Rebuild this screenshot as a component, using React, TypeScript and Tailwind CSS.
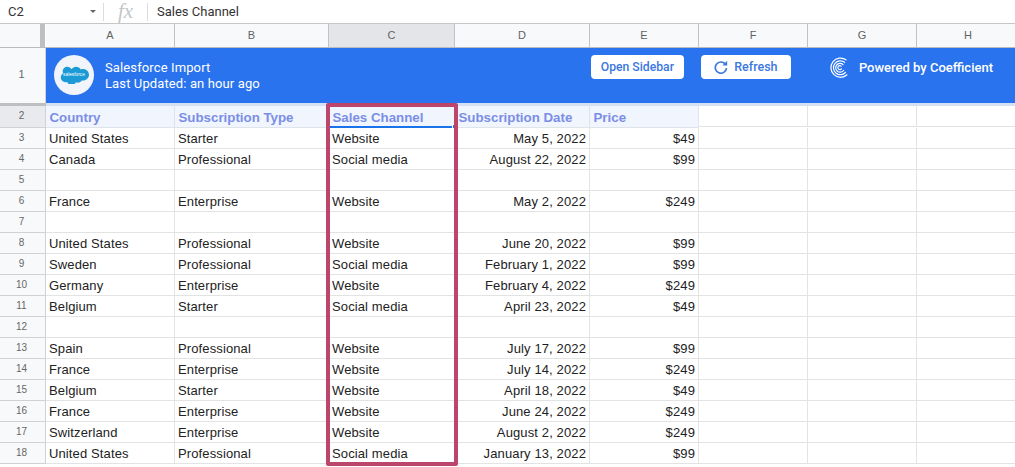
import React from "react";

const columns = ["A", "B", "C", "D", "E", "F", "G", "H"];
const grid = "grid grid-cols-[46px_129px_154px_126px_135px_109px_109px_109px_103px]";

type Row = { n: number; country?: string; plan?: string; channel?: string; date?: string; price?: string };

const rows: Row[] = [
  { n: 3, country: "United States", plan: "Starter", channel: "Website", date: "May 5, 2022", price: "$49" },
  { n: 4, country: "Canada", plan: "Professional", channel: "Social media", date: "August 22, 2022", price: "$99" },
  { n: 5 },
  { n: 6, country: "France", plan: "Enterprise", channel: "Website", date: "May 2, 2022", price: "$249" },
  { n: 7 },
  { n: 8, country: "United States", plan: "Professional", channel: "Website", date: "June 20, 2022", price: "$99" },
  { n: 9, country: "Sweden", plan: "Professional", channel: "Social media", date: "February 1, 2022", price: "$99" },
  { n: 10, country: "Germany", plan: "Enterprise", channel: "Website", date: "February 4, 2022", price: "$249" },
  { n: 11, country: "Belgium", plan: "Starter", channel: "Social media", date: "April 23, 2022", price: "$49" },
  { n: 12 },
  { n: 13, country: "Spain", plan: "Professional", channel: "Website", date: "July 17, 2022", price: "$99" },
  { n: 14, country: "France", plan: "Enterprise", channel: "Website", date: "July 14, 2022", price: "$249" },
  { n: 15, country: "Belgium", plan: "Starter", channel: "Website", date: "April 18, 2022", price: "$49" },
  { n: 16, country: "France", plan: "Enterprise", channel: "Website", date: "June 24, 2022", price: "$249" },
  { n: 17, country: "Switzerland", plan: "Enterprise", channel: "Website", date: "August 2, 2022", price: "$249" },
  { n: 18, country: "United States", plan: "Professional", channel: "Social media", date: "January 13, 2022", price: "$99" },
];

const headers = ["Country", "Subscription Type", "Sales Channel", "Subscription Date", "Price"];

const Cell = ({ children, right }: { children?: React.ReactNode; right?: boolean }) => (
  <div className={`h-[21px] border-r border-b border-[#e2e3e3] px-[3px] text-[13px] tracking-[0.12px] leading-[21px] text-[#222] whitespace-nowrap overflow-hidden ${right ? "text-right" : ""}`}>
    {children}
  </div>
);

const RowLabel = ({ n }: { n: number }) => (
  <div className="h-[21px] bg-[#f8f9fa] border-r border-b border-[#d0d2d4] text-center pr-[2px] text-[10px] leading-[20px] text-[#666]">
    {n}
  </div>
);

const SalesforceLogo = () => (
  <div className="w-[40px] h-[40px] rounded-full bg-[#f1f5fb] flex items-center justify-center">
    <div className="relative w-[29px] h-[18px]">
      <svg viewBox="0 0 30 18" className="w-full h-full">
        <path d="M12 3c1-1.600 2.700-2.500 4.500-2.500 2.200 0 4 1.100 5 2.800 .8-.4 1.500-.5 2.300-.5 3.400 0 6.200 2.700 6.200 6s-2.800 6-6.200 6c-.4 0-.8 0-1.300-.1-.8 1.400-2.300 2.300-4 2.300-.7 0-1.400-.2-2-.5-.8 1.800-2.500 3-4.500 3-2.100 0-3.900-1.300-4.600-3.200-.3 .1-.7 .1-1 .1C3 16.400 .8 14.200 .8 11.500c0-1.800 1-3.400 2.400-4.300-.3-.7-.4-1.400-.4-2.100C2.800 2.400 5 .4 7.600 .4 9.300 .4 11 1.400 12 3z" fill="#1c9ad6" />
      </svg>
      <span className="absolute inset-0 flex items-center justify-center text-[4.800px] leading-none text-white font-['Liberation_Sans',sans-serif]">
        salesforce
      </span>
    </div>
  </div>
);

const CoefficientLogo = () => (
  <svg viewBox="0 0 19 21" className="w-[19px] h-[21px]" fill="none" stroke="white" strokeWidth="1.200" strokeLinecap="round">
    <path d="M17 2.800A9.600 9.600 0 1 0 18 17.800" />
    <path d="M15.600 5.300A6.900 6.900 0 1 0 16.400 15.500" />
    <path d="M14 7.500A4.400 4.400 0 1 0 14.600 13.500" />
    <path d="M12.200 9.100A2 2 0 1 0 12.400 11.900" />
  </svg>
);

const RefreshIcon = () => (
  <svg viewBox="0 0 14 14" className="w-[14px] h-[14px]" fill="none">
    <path d="M11.300 4.100A5.600 5.600 0 1 0 12.500 8.200" stroke="#3b78e0" strokeWidth="1.700" />
    <path d="M13.200 0.800V5.600H8.400z" fill="#3b78e0" />
  </svg>
);

export default function App() {
  return (
    <div className="relative w-[1015px] h-[467px] overflow-hidden bg-white font-['Liberation_Sans',Arial,sans-serif]">
      {/* formula bar */}
      <div className="flex items-center h-[24px] border-b border-[#c4c6c8] text-[13px] text-[#333] font-['Roboto',sans-serif]">
        <div className="w-[104px] flex items-center justify-between pl-[8px] pr-[7px] border-r border-[#dadce0] h-[18px]">
          <span>C2</span>
          <span className="w-0 h-0 border-x-[3px] border-t-[3px] border-x-transparent border-t-[#666]" />
        </div>
        <div className="w-[44px] border-r border-[#dadce0] h-[18px] flex items-center justify-center">
          <span className="font-['Liberation_Serif',serif] italic text-[21px] leading-none text-[#c4c6c8]">fx</span>
        </div>
        <span className="pl-[9px]">Sales Channel</span>
      </div>

      {/* column letters */}
      <div className={`${grid} h-[24px] border-b border-[#b9bbbd]`}>
        <div className="bg-[#f8f9fa] border-r-[5px] border-[#bdbfc1] mr-[1px]" />
        {columns.map((c) => (
          <div
            key={c}
            className={`border-r border-[#c0c2c4] text-center text-[11px] leading-[23px] text-[#5f6368] ${c === "C" ? "bg-[#e3e5e8]" : "bg-[#f8f9fa]"}`}
          >
            {c}
          </div>
        ))}
      </div>

      {/* row 1, merged banner */}
      <div className="flex h-[55px]">
        <div className="w-[46px] bg-[#f8f9fa] border-r border-[#d0d2d4] text-center pr-[2px] text-[11px] leading-[53px] text-[#666]">1</div>
        <div className="flex-1 flex items-start bg-[#2a73ee] text-white font-['Roboto',sans-serif]">
          <div className="ml-[8px] mt-[7px]">
            <SalesforceLogo />
          </div>
          <div className="ml-[11px] mt-[12px] text-[13px] leading-[16px] tracking-[0.12px]">
            <div>Salesforce Import</div>
            <div>Last Updated: an hour ago</div>
          </div>
          <button className="ml-[331px] mt-[7px] w-[93px] h-[24px] rounded-[4px] bg-white text-[12.200px] font-medium text-[#3b78e0]">
            Open Sidebar
          </button>
          <button className="ml-[17px] mt-[7px] w-[90px] h-[24px] rounded-[4px] bg-white text-[12.500px] font-medium text-[#3b78e0] flex items-center justify-center gap-[6px]">
            <RefreshIcon />
            Refresh
          </button>
          <div className="ml-[38px] mt-[9px] flex items-center gap-[11px] text-[13px] font-medium">
            <CoefficientLogo />
            Powered by Coefficient
          </div>
        </div>
      </div>

      {/* frozen rows divider */}
      <div className="flex h-[3px]">
        <div className="w-[46px] bg-[#bdbfc1]" />
        <div className="flex-1 bg-[#d6e0f3]" />
      </div>

      {/* row 2, table header */}
      <div className={grid}>
        <div className="h-[22px] bg-[#e8eaed] border-r border-b border-[#d0d2d4] text-center pr-[2px] text-[10px] leading-[20px] text-[#666]">2</div>
        {headers.map((h, i) => (
          <div
            key={h}
            className="relative h-[22px] bg-[#f0f5fe] border-r border-b border-[#dfe3ea] pl-[3.500px] text-[13.300px] font-bold leading-[23px] text-[#7b8ee6] whitespace-nowrap"
          >
            {h}
            {i === 2 && <div className="absolute left-0 right-0 bottom-[-1px] h-[2px] bg-[#1a73e8]" />}
            {i === 2 && <div className="absolute right-[-3px] bottom-[-2px] w-[5px] h-[5px] bg-[#1a73e8] border border-white" />}
          </div>
        ))}
        <Cell />
        <Cell />
        <Cell />
      </div>

      {/* data rows */}
      {rows.map((r) => (
        <div key={r.n} className={grid}>
          <RowLabel n={r.n} />
          <Cell>{r.country}</Cell>
          <Cell>{r.plan}</Cell>
          <Cell>{r.channel}</Cell>
          <Cell right>{r.date}</Cell>
          <Cell right>{r.price}</Cell>
          <Cell />
          <Cell />
          <Cell />
        </div>
      ))}

      {/* callout drawn over the Sales Channel column */}
      <div className="absolute left-[326px] top-[103px] w-[132px] h-[363px] border-[4px] border-[#bc466b] rounded-[2px] pointer-events-none" />
    </div>
  );
}
